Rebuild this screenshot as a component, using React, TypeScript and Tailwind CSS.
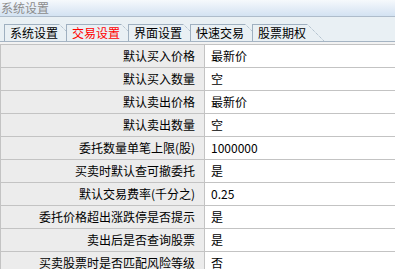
const tabs = ['系统设置', '交易设置', '界面设置', '快速交易', '股票期权'];

const rows: [string, string][] = [
  ['默认买入价格', '最新价'],
  ['默认买入数量', '空'],
  ['默认卖出价格', '最新价'],
  ['默认卖出数量', '空'],
  ['委托数量单笔上限(股)', '1000000'],
  ['买卖时默认查可撤委托', '是'],
  ['默认交易费率(千分之)', '0.25'],
  ['委托价格超出涨跌停是否提示', '是'],
  ['卖出后是否查询股票', '是'],
  ['买卖股票时是否匹配风险等级', '否'],
];

export default function App() {
  return (
    <div
      className="w-[395px] h-[269px] overflow-hidden bg-white text-[12px] leading-[16px] text-black"
      style={{ fontFamily: '"Noto Sans CJK SC", "Liberation Sans", sans-serif' }}
    >
      <div className="h-[16px] bg-gradient-to-b from-[#f6f9fc] to-[#d3e2f2] text-[#8c8c8c] pl-[1px] leading-[15px]">
        系统设置
      </div>
      <div className="h-px bg-[#aebccb]" />
      <div className="h-[25px] bg-[#e9f0f4] border-b border-[#a5b4c3] flex items-end pl-[4px]">
        {tabs.map((t, i) => (
          <div
            key={t}
            className={`relative h-[17px] w-[55px] shrink-0 border-l border-t border-[#9fb0c0] bg-[#e9f0f4] pl-[5px] leading-[16px] ${
              i > 0 ? 'ml-[7px]' : ''
            } ${i === 1 ? 'text-[#ff0000]' : 'text-black'}`}
          >
            {t}
            <svg className="absolute top-[-1px] left-[54px]" width="18" height="18">
              <line x1="0.5" y1="0.5" x2="17.5" y2="17.5" stroke="#9fb0c0" strokeWidth="1" strokeDasharray="1 1" />
            </svg>
          </div>
        ))}
      </div>
      <div className="h-[2px] bg-[#f2f2f2]" />
      <div className="border-t border-l border-[#c3c3c3]">
        {rows.map(([label, value]) => (
          <div key={label} className="flex h-[23px] border-b border-[#c3c3c3]">
            <div className="w-[204px] shrink-0 bg-[#ececec] border-r border-[#c3c3c3] flex items-center justify-end pr-[9px] whitespace-nowrap">
              {label}
            </div>
            <div className="flex-1 flex items-center pl-[6px]">{value}</div>
          </div>
        ))}
      </div>
    </div>
  );
}
